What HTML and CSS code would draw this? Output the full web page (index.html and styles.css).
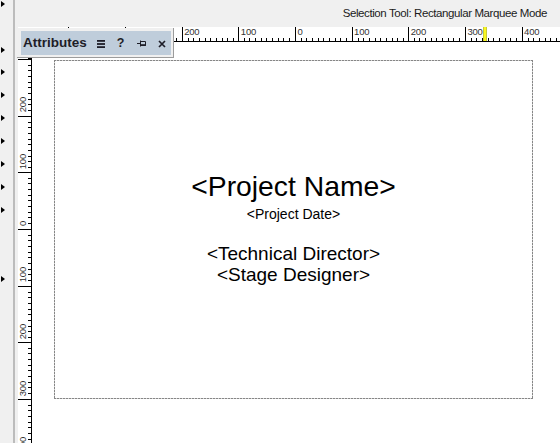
FILE: index.html
```html
<!DOCTYPE html>
<html>
<head>
<meta charset="utf-8">
<link rel="stylesheet" href="styles.css">
</head>
<body>
<div class="app">
  <div class="toolstrip">
    <div class="slots">
      <div class="slot"><i class="tri"></i></div>
      <div class="slot"></div>
      <div class="slot"><i class="tri"></i></div>
      <div class="slot"><i class="tri"></i></div>
      <div class="slot"><i class="tri"></i></div>
      <div class="slot"><i class="tri"></i></div>
      <div class="slot"><i class="tri"></i></div>
      <div class="slot"><i class="tri"></i></div>
      <div class="slot"><i class="tri"></i></div>
      <div class="slot"><i class="tri"></i></div>
      <div class="slot"></div>
      <div class="slot"></div>
      <div class="slot"><i class="tri"></i></div>
    </div>
  </div>
  <div class="divider"></div>
  <div class="main">
    <div class="status">Selection Tool: Rectangular Marquee Mode</div>
    <div class="view">
      <div class="ruler-row">
        <div class="corner"></div>
        <div class="hruler">
          <div class="hseg first"></div>
          <div class="hseg"></div>
          <div class="hseg"></div>
          <div class="hseg"><span>200</span></div>
          <div class="hseg"><span>100</span></div>
          <div class="hseg"><span>0</span></div>
          <div class="hseg"><span>100</span></div>
          <div class="hseg"><span>200</span></div>
          <div class="hseg"><span>300</span></div>
          <div class="hseg"><span>400</span></div>
          <div class="hseg"></div>
          <div class="marker"></div>
        </div>
      </div>
      <div class="view-body">
        <div class="vruler">
          <div class="vseg first"></div>
          <div class="vseg"><span>200</span></div>
          <div class="vseg"><span>100</span></div>
          <div class="vseg"><span>0</span></div>
          <div class="vseg"><span>100</span></div>
          <div class="vseg"><span>200</span></div>
          <div class="vseg"><span>300</span></div>
          <div class="vseg"><span>400</span></div>
        </div>
        <div class="canvas">
          <div class="page">
            <div class="t-name">&lt;Project Name&gt;</div>
            <div class="t-date">&lt;Project Date&gt;</div>
            <div class="t-tech">&lt;Technical Director&gt;</div>
            <div class="t-stage">&lt;Stage Designer&gt;</div>
          </div>
        </div>
      </div>
    </div>
  </div>
  <div class="palette">
    <div class="palette-bar">
      <span class="palette-title">Attributes</span>
      <svg class="ic-menu" width="8" height="8" viewBox="0 0 8 8"><rect x="0" y="0" width="8" height="1.8"/><rect x="0" y="3.1" width="8" height="1.8"/><rect x="0" y="6.2" width="8" height="1.8"/></svg>
      <span class="ic-help">?</span>
      <svg class="ic-pin" width="10" height="7" viewBox="0 0 10 7"><path d="M0 3.5H3.5M3.5 0.5V6.5M3.5 1.5H8.5V5.5H3.5" fill="none" stroke="#1e1e28" stroke-width="1"/><rect x="3.5" y="4.2" width="5.5" height="1.6"/></svg>
      <svg class="ic-close" width="8" height="8" viewBox="0 0 8 8"><path d="M1 1L7 7M7 1L1 7" stroke="#1e1e28" stroke-width="1.7" fill="none"/></svg>
    </div>
  </div>
</div>
</body>
</html>
```

FILE: styles.css
```css
* { box-sizing: border-box; }
html, body { margin: 0; padding: 0; }
body { width: 560px; height: 443px; overflow: hidden; background: #f0f0f0; font-family: "Liberation Sans", Arial, sans-serif; }

.app { position: relative; display: flex; width: 560px; height: 443px; background: #f0f0f0; overflow: hidden; }

.toolstrip { flex: none; width: 13px; overflow: hidden; }
.slots { display: flex; flex-direction: column; margin-top: -7.8px; }
.slot { flex: none; height: 22.93px; display: flex; align-items: center; padding-left: 1px; }
.tri { display: block; width: 0; height: 0; border-left: 4px solid #000; border-top: 3.5px solid transparent; border-bottom: 3.5px solid transparent; }

.divider { flex: none; width: 2px; background: #bcbcbc; }

.main { flex: 1; display: flex; flex-direction: column; padding-left: 3px; min-width: 0; }
.status { flex: none; height: 27px; display: flex; align-items: center; justify-content: flex-end; padding-right: 13px; padding-bottom: 1px; font-size: 11.5px; letter-spacing: -0.4px; color: #1b1b1b; white-space: nowrap; }

.view { flex: 1; display: flex; flex-direction: column; background: #fff; overflow: hidden; }

.ruler-row { flex: none; display: flex; height: 15px; border-bottom: 1px solid #000; }
.corner { flex: none; width: 14px; }
.hruler { flex: 1; display: flex; position: relative; overflow: hidden; }
.hseg { flex: none; width: 56.667px; height: 14px; border-left: 1px solid #000; padding-left: 1.5px; font-size: 9.5px; line-height: 10px; color: #333; letter-spacing: -0.2px;
  background: repeating-linear-gradient(to right, #000 0 1px, transparent 1px 5.667px) left bottom / 100% 3px no-repeat;
  background-origin: border-box; }
.hseg.first { width: 36.333px; border-left: none;
  background: repeating-linear-gradient(to left, transparent 0 4.667px, #000 4.667px 5.667px) right bottom / 100% 3px no-repeat; }
.marker { position: absolute; left: 451px; top: 0; width: 4px; height: 14px; background: #f8f820; border-left: 1px solid #c9c93a; border-right: 1px solid #c9c93a; }

.view-body { flex: 1; display: flex; min-height: 0; }
.vruler { flex: none; width: 14px; border-right: 1px solid #000; display: flex; flex-direction: column; overflow: hidden; }
.vseg { flex: none; height: 56.667px; border-bottom: 1px solid #000; display: flex; align-items: flex-end; padding-bottom: 3px;
  background: repeating-linear-gradient(to bottom, transparent 0 4.667px, #000 4.667px 5.667px) right top / 3px 100% no-repeat; }
.vseg.first { height: 18px;
  background: repeating-linear-gradient(to top, #000 0 1px, transparent 1px 5.667px) right bottom / 3px 100% no-repeat; }
.vseg span { writing-mode: vertical-rl; transform: rotate(180deg); font-size: 9.5px; line-height: 9px; color: #333; letter-spacing: -0.2px; }

.canvas { flex: 1; padding: 18px 0 0 22px; background: #fff; }
.page { width: 479px; height: 339px; padding-top: 110.3px; text-align: center; color: #000; font-family: "Liberation Sans", Arial, sans-serif;
  background:
    repeating-linear-gradient(90deg, #868686 0 2px, #d2d2d2 2px 3px) left top / 100% 1px no-repeat,
    repeating-linear-gradient(90deg, #868686 0 2px, #d2d2d2 2px 3px) left bottom / 100% 1px no-repeat,
    repeating-linear-gradient(180deg, #868686 0 2px, #d2d2d2 2px 3px) left top / 1px 100% no-repeat,
    repeating-linear-gradient(180deg, #868686 0 2px, #d2d2d2 2px 3px) right top / 1px 100% no-repeat,
    #fff; }
.t-name { font-size: 28.3px; line-height: 32px; }
.t-date { font-size: 14px; line-height: 16px; margin-top: 3.85px; }
.t-tech { font-size: 19px; line-height: 21px; margin-top: 20.75px; }
.t-stage { font-size: 19px; line-height: 21px; }

.palette { position: absolute; left: 17px; top: 28px; width: 157px; height: 30px; background: #f0f0f0; border-right: 1px solid #9c9c9c; border-bottom: 1px solid #9c9c9c; padding: 3px 2px 2px 4px; }
.palette-bar { height: 24px; background: #bfcddb; display: flex; align-items: center; padding-left: 2px; color: #1e1e28; }
.palette-title { font-weight: bold; font-size: 13.5px; line-height: 16px; }
.ic-menu { flex: none; margin-left: 10px; fill: #1e1e28; margin-top: 1px; }
.ic-help { font-weight: bold; font-size: 12.5px; line-height: 14px; margin-left: 12px; }
.ic-pin { flex: none; margin-left: 13px; fill: #1e1e28; margin-top: 1px; }
.ic-close { flex: none; margin-left: 11px; margin-top: 1px; }
```
